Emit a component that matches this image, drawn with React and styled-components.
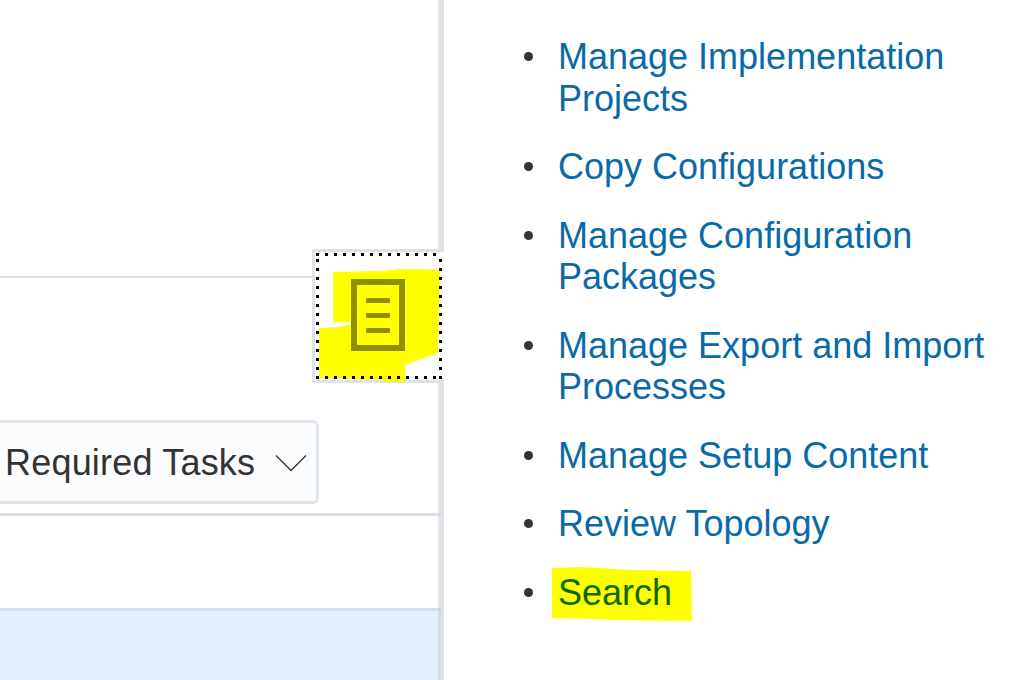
import React from "react";
import styled, { createGlobalStyle } from "styled-components";

const Global = createGlobalStyle`
	html, body {
		margin: 0;
		padding: 0;
		background: #fff;
		overflow: hidden;
	}
	* { box-sizing: border-box; }
`;

const links = [
	{ label: "Manage Implementation Projects" },
	{ label: "Copy Configurations" },
	{ label: "Manage Configuration Packages" },
	{ label: "Manage Export and Import Processes" },
	{ label: "Manage Setup Content" },
	{ label: "Review Topology" },
	{ label: "Search", marked: true },
];

export default function App() {
	return (
		<Page>
			<Global />
			<LeftPane>
				<TopArea />
				<FilterRow>
					<FilterButton>
						<FilterLabel>Required Tasks</FilterLabel>
						<svg width="34" height="20" viewBox="0 0 34 20" fill="none">
							<path d="M2 2.5 L17 17.5 L32 2.5" stroke="#333" strokeWidth="1.3" />
						</svg>
					</FilterButton>
				</FilterRow>
				<BlankRow />
				<BlueRow />
				<Handle>
					<Dots />
					<svg width="132" height="134" viewBox="312 249 132 134">
						<polygon
							fill="#ffff00"
							points="333,272 380,271 400,269 418,269 440,270 438,353 405,365 405,382 385,382 380,380 319,378 319,328 340,327 351,324 351,322 333,322"
						/>
						<rect x="354" y="282" width="48" height="66" fill="none" stroke="#8f8f00" strokeWidth="6" />
						<rect x="366" y="298" width="24" height="5" rx="1" fill="#8f8f00" />
						<rect x="366" y="313" width="24" height="5" rx="1" fill="#8f8f00" />
						<rect x="366" y="328" width="24" height="5" rx="1" fill="#8f8f00" />
					</svg>
				</Handle>
			</LeftPane>
			<Divider />
			<RightPane>
				<List>
					{links.map((link) => (
						<Item key={link.label}>
							<Bullet />
							<ItemLink $marked={link.marked}>
								{link.marked && (
									<Marker width="142" height="56" viewBox="552 565 142 56">
										<polygon
											fill="#ffff00"
											points="552,566 582,565 633,568 691,569 692,619 615,618 592,617 552,616"
										/>
									</Marker>
								)}
								<span>{link.label}</span>
							</ItemLink>
						</Item>
					))}
				</List>
			</RightPane>
		</Page>
	);
}

const Page = styled.div`
	display: flex;
	width: 1011px;
	height: 680px;
	overflow: hidden;
	font-family: "Liberation Sans", Arial, sans-serif;
`;

const LeftPane = styled.div`
	position: relative;
	flex: 0 0 441px;
	display: flex;
	flex-direction: column;
`;

const TopArea = styled.div`
	height: 278px;
	border-bottom: 2px solid #d9e1e8;
`;

const FilterRow = styled.div`
	height: 238px;
	padding-top: 142px;
	border-bottom: 3px solid #d9e1e8;
`;

const FilterButton = styled.div`
	display: flex;
	align-items: center;
	justify-content: space-between;
	width: 320px;
	height: 84px;
	margin-left: -1px;
	padding: 0 8px 0 6px;
	background: #fbfcfe;
	border: 3px solid #e0e6ea;
	border-left: 0;
	border-radius: 0 6px 6px 0;
	color: #333;
	font-size: 36px;
	white-space: nowrap;
	svg { margin-top: 2px; }
`;

const FilterLabel = styled.span`
	margin-top: 1px;
	letter-spacing: 0.2px;
`;

const BlankRow = styled.div`
	height: 92px;
`;

const BlueRow = styled.div`
	flex: 1;
	background: #e2f0fe;
	border-top: 3px solid #d5dfe8;
`;

const Handle = styled.div`
	position: absolute;
	z-index: 2;
	left: 312px;
	top: 249px;
	width: 132px;
	height: 134px;
	background: #fff;
	border: 3px solid #dfe3e8;
	border-right: 0;
	svg {
		position: absolute;
		left: -3px;
		top: -3px;
	}
`;

const Dots = styled.div`
	position: absolute;
	z-index: 1;
	left: 1px;
	top: 1px;
	width: 126px;
	height: 126px;
	background:
		repeating-linear-gradient(90deg, #000 0 3px, transparent 3px 9px) 0 0 / 100% 3px no-repeat,
		repeating-linear-gradient(90deg, #000 0 3px, transparent 3px 9px) 0 100% / 100% 3px no-repeat,
		repeating-linear-gradient(0deg, #000 0 3px, transparent 3px 9px) 0 0 / 3px 100% no-repeat,
		repeating-linear-gradient(0deg, #000 0 3px, transparent 3px 9px) 100% 0 / 3px 100% no-repeat;
`;

const Divider = styled.div`
	position: relative;
	z-index: 1;
	flex: 0 0 6px;
	margin: 0 -3px;
	background: linear-gradient(90deg, rgba(190, 197, 207, 0.45) 0 50%, #dfe1e5 50% 100%);
`;

const RightPane = styled.div`
	flex: 1;
	padding: 36px 10px 0 83px;
`;

const List = styled.ul`
	display: flex;
	flex-direction: column;
	gap: 27px;
	margin: 0;
	padding: 0;
	list-style: none;
`;

const Item = styled.li`
	display: flex;
	align-items: flex-start;
	font-size: 36px;
	line-height: 41.5px;
`;

const Bullet = styled.i`
	flex: 0 0 9px;
	height: 9px;
	margin: 16px 25px 0 0;
	border-radius: 50%;
	background: #333;
`;

const ItemLink = styled.a`
	position: relative;
	color: ${(p) => (p.$marked ? "#0a6b00" : "#0a6aa8")};
	span { position: relative; }
`;

const Marker = styled.svg`
	position: absolute;
	left: -6px;
	top: -5px;
`;
